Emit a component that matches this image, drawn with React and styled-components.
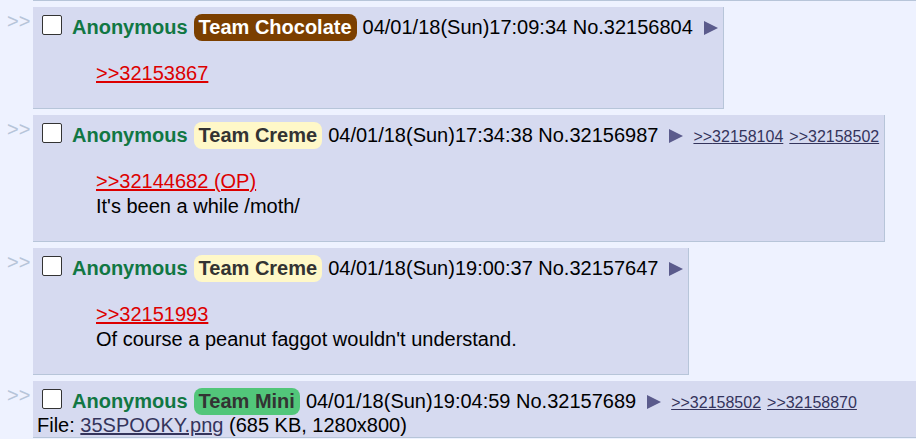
import React from "react";
import styled, { createGlobalStyle } from "styled-components";

const GlobalStyle = createGlobalStyle`
  body {
    margin: 0;
    background: #eef2ff;
    color: #000;
    font-family: "Liberation Sans", Arial, sans-serif;
    font-size: 20px;
    overflow: hidden;
  }
`;

const Thread = styled.div`
  display: flex;
  flex-direction: column;
  gap: 6px;
  padding-left: 7px;
`;

const PrevTail = styled.div`
  margin-left: 26px;
  background: #d6daf0;
  border-bottom: 1px solid #b7c5d9;
`;

const Row = styled.div`
  display: flex;
  align-items: flex-start;
`;

const SideArrows = styled.div`
  flex: none;
  width: 26px;
  padding-top: 2px;
  line-height: 25px;
  color: #b7c5d9;
`;

const Post = styled.div`
  flex: ${({ $wide }) => ($wide ? 1 : "none")};
  background: #d6daf0;
  border-right: ${({ $wide }) => ($wide ? "none" : "1px solid #b7c5d9")};
  border-bottom: 1px solid #b7c5d9;
  padding: 7px 5px 2px 3px;
`;

const PostInfo = styled.div`
  display: flex;
  align-items: baseline;
  height: 27px;
  line-height: 27px;
  white-space: nowrap;
`;

const Check = styled.input.attrs({ type: "checkbox" })`
  appearance: none;
  align-self: flex-start;
  box-sizing: border-box;
  width: 20px;
  height: 20px;
  margin: 1px 10px 0 6px;
  background: #fff;
  border: 1px solid #333;
  border-radius: 2px;
`;

const Name = styled.span`
  font-weight: bold;
  color: #117743;
  margin-right: 6px;
`;

const badgeColors = {
  chocolate: { bg: "#7b3f00", fg: "#fff" },
  creme: { bg: "#fff8c8", fg: "#333" },
  mini: { bg: "#52c67a", fg: "#333" },
};

const Badge = styled.span`
  font-weight: bold;
  padding: 0 5px;
  margin-right: 6px;
  border-radius: 8px;
  background: ${({ $team }) => badgeColors[$team].bg};
  color: ${({ $team }) => badgeColors[$team].fg};
`;

const MenuArrow = styled.svg`
  align-self: center;
  flex: none;
  margin-left: 11px;
`;

const Backlinks = styled.span`
  display: flex;
  gap: 6px;
  margin-left: 10px;
  font-size: 16px;
`;

const Link = styled.a`
  color: #34345c;
  text-decoration: underline;
`;

const Message = styled.div`
  margin: 20px 0 20px 60px;
  line-height: 25px;
`;

const QuoteLink = styled.a`
  display: block;
  color: #dd0000;
  text-decoration: underline;
`;

const FileInfo = styled.div`
  margin-left: 1px;
  line-height: 20px;
  white-space: nowrap;
`;

const posts = [
  {
    team: "chocolate",
    label: "Team Chocolate",
    date: "04/01/18(Sun)17:09:34",
    no: "32156804",
    quote: ">>32153867",
  },
  {
    team: "creme",
    label: "Team Creme",
    date: "04/01/18(Sun)17:34:38",
    no: "32156987",
    backlinks: ["32158104", "32158502"],
    quote: ">>32144682 (OP)",
    text: "It's been a while /moth/",
  },
  {
    team: "creme",
    label: "Team Creme",
    date: "04/01/18(Sun)19:00:37",
    no: "32157647",
    quote: ">>32151993",
    text: "Of course a peanut faggot wouldn't understand.",
  },
  {
    team: "mini",
    label: "Team Mini",
    date: "04/01/18(Sun)19:04:59",
    no: "32157689",
    backlinks: ["32158502", "32158870"],
    file: { name: "35SPOOKY.png", meta: "(685 KB, 1280x800)" },
  },
];

function Reply({ post }) {
  return (
    <Row>
      <SideArrows>&gt;&gt;</SideArrows>
      <Post $wide={!!post.file}>
        <PostInfo>
          <Check readOnly />
          <Name>Anonymous</Name>
          <Badge $team={post.team}>{post.label}</Badge>
          <span>
            {post.date} No.{post.no}
          </span>
          <MenuArrow width="14" height="14" viewBox="0 0 14 14">
            <polygon points="0,0 14,7 0,14" fill="#5b5b8c" />
          </MenuArrow>
          {post.backlinks && (
            <Backlinks>
              {post.backlinks.map((b) => (
                <Link key={b}>&gt;&gt;{b}</Link>
              ))}
            </Backlinks>
          )}
        </PostInfo>
        {post.file && (
          <FileInfo>
            File: <Link>{post.file.name}</Link> {post.file.meta}
          </FileInfo>
        )}
        {post.quote && (
          <Message>
            <QuoteLink>{post.quote}</QuoteLink>
            {post.text && <div>{post.text}</div>}
          </Message>
        )}
      </Post>
    </Row>
  );
}

export default function App() {
  return (
    <>
      <GlobalStyle />
      <Thread>
        <PrevTail />
        {posts.map((p) => (
          <Reply key={p.no} post={p} />
        ))}
      </Thread>
    </>
  );
}
